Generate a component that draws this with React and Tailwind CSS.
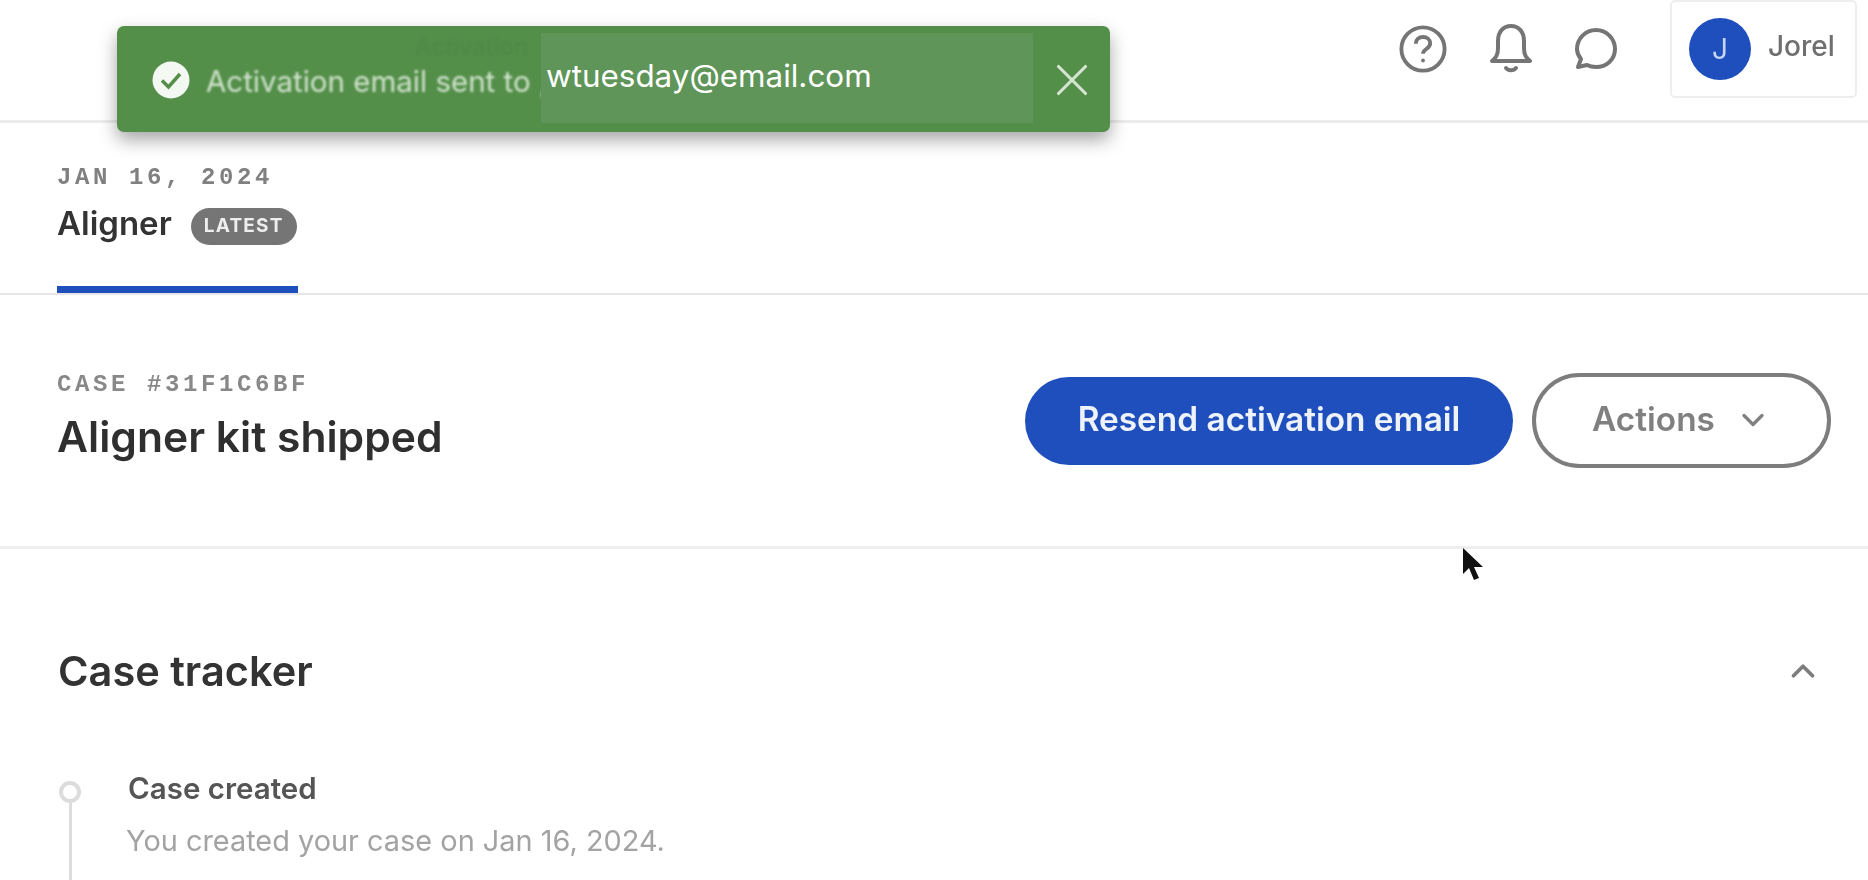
import { ChevronDown, ChevronUp, X } from "lucide-react";

const sans = "font-['Inter',sans-serif]";
const mono = "font-['Liberation_Mono',monospace]";

const Toast = () => (
  <div className={`absolute left-[117px] top-[26px] z-10 flex h-[106px] w-[993px] items-center rounded-[7px] bg-[#548f4a] pl-[35px] shadow-[0_8px_18px_rgba(0,0,0,0.35)] ${sans}`}>
    {/* ghost of the page title behind the toast */}
    <span className="absolute left-[298px] top-[9px] text-[24px] leading-[24px] text-[#4f8a45] blur-[1px]">Activation</span>
    <svg width="38" height="38" viewBox="0 0 38 38" className="mt-[2px] shrink-0 blur-[0.5px]">
      <circle cx="19" cy="19" r="18.5" fill="#f4f8f3" />
      <path d="M10 19.5l6.500 6.500 11.500-13" fill="none" stroke="#548f4a" strokeWidth="3.5" />
    </svg>
    <span className="mt-[3px] ml-[16px] text-[29.5px] leading-[32px] whitespace-nowrap text-[#cfe2cb] blur-[0.8px]">Activation email sent to ,</span>
    <div className="absolute left-[424px] top-[7px] flex h-[90px] w-[492px] items-center bg-[#5f9558] pb-[2px] pl-[5px] text-[31.4px] text-white">
      wtuesday@email.com
    </div>
    <X className="absolute right-[11px] top-[27px] text-[#d5e5d2] blur-[0.6px]" size={54} strokeWidth={1.4} />
  </div>
);

const Header = () => (
  <header className="flex h-[123px] items-start justify-end border-b-[3px] border-[#ececec] pr-[11px]">
    <div className="flex h-[98px] items-center gap-[42px] text-[#757575]">
      <svg className="blur-[0.5px]" width="48" height="48" viewBox="0 0 50 50" fill="none" stroke="currentColor" strokeWidth="4">
        <circle cx="25" cy="25" r="22.5" />
        <path d="M17.5 19.5c0-4.5 3.4-7 7.500-7s7.500 2.600 7.500 6.500c0 6-7.500 6-7.500 11" />
        <circle cx="25" cy="37" r="2" fill="currentColor" stroke="none" />
      </svg>
      <svg className="blur-[0.5px]" width="44" height="50" viewBox="0 0 44 50" fill="none" stroke="currentColor" strokeWidth="4" strokeLinejoin="round">
        <path d="M3 37c4-3.500 6-6 6-13V17C9 8 14 2 22 2s13 6 13 15v7c0 7 2 9.500 6 13H3z" />
        <path d="M17 44c2.500 3 7.500 3 10 0" strokeLinecap="round" />
      </svg>
      <svg className="blur-[0.5px]" width="42" height="42" viewBox="0 0 42 42" fill="none" stroke="currentColor" strokeWidth="4" strokeLinejoin="round">
        <path d="M3 39l3-8C3.500 28 2 25 2 21 2 10.500 10.500 2 21 2s19 8.500 19 19-8.500 18-19 18c-3.500 0-6.500-.7-9-2L3 39z" />
      </svg>
      <div className="ml-[11px] flex h-[98px] w-[187px] items-center rounded-[5px] border-[2px] border-[#eeeeee] pl-[17px]">
        <div className={`flex h-[62px] w-[62px] items-center justify-center rounded-full bg-[#1f4fbd] text-[28px] text-[#c7d5f3] blur-[0.5px] ${sans}`}>J</div>
        <span className={`ml-[17px] pb-[6px] text-[28px] font-medium text-[#6f6f6f] blur-[0.7px] ${sans}`}>Jorel</span>
      </div>
    </div>
  </header>
);

const TabBar = () => (
  <div className="flex h-[172px] border-b-[2px] border-[#e6e6e6] pl-[57px]">
    <div className="relative flex w-[241px] flex-col pt-[41px]">
      <span className={`text-[24px] leading-[28px] font-bold tracking-[3.6px] whitespace-nowrap text-[#808080] blur-[0.6px] ${mono}`}>JAN 16, 2024</span>
      <div className="mt-[9px] flex items-center">
        <span className={`text-[33px] leading-[40px] font-semibold text-[#333333] blur-[0.7px] ${sans}`}>Aligner</span>
        <span className={`mt-[7px] ml-[19px] flex h-[37px] w-[106px] items-center justify-center rounded-full bg-[#757575] text-[19px] font-bold tracking-[1.2px] text-[#eeeeee] blur-[0.7px] ${sans}`}>LATEST</span>
      </div>
      <div className="absolute right-0 bottom-0 left-0 h-[7px] bg-[#1f4fbd]" />
    </div>
  </div>
);

const CaseHeader = () => (
  <section className="flex h-[254px] items-start justify-between border-b-[3px] border-[#eeeeee] pr-[37px] pl-[57px]">
    <div className="pt-[76px]">
      <div className={`text-[24px] leading-[28px] font-bold tracking-[3.6px] whitespace-nowrap text-[#888888] blur-[0.6px] ${mono}`}>CASE #31F1C6BF</div>
      <h1 className={`mt-[12px] text-[42.6px] leading-[52px] font-semibold text-[#2f2f2f] blur-[0.7px] ${sans}`}>Aligner kit shipped</h1>
    </div>
    <div className="flex items-center gap-[19px] pt-[78px]">
      <button className={`flex h-[88px] w-[488px] items-center justify-center rounded-full bg-[#1f4fbd] pb-[2px] text-[33.4px] font-semibold text-[#eef2fb] blur-[0.6px] ${sans}`}>Resend activation email</button>
      <button className={`flex h-[95px] w-[299px] items-center justify-center rounded-full border-[4px] border-[#7d7d7d] pb-[2px] text-[33.4px] font-semibold text-[#808080] blur-[0.6px] ${sans}`}>
        Actions
        <ChevronDown className="ml-[20px]" size={36} strokeWidth={2.2} />
      </button>
    </div>
  </section>
);

const CaseTracker = () => (
  <section className="pr-[46px] pl-[58px]">
    <div className="flex items-center justify-between pt-[97px]">
      <h2 className={`text-[41.5px] leading-[50px] font-semibold text-[#333333] blur-[0.7px] ${sans}`}>Case tracker</h2>
      <ChevronUp className="text-[#7d7d7d] blur-[0.7px]" size={38} strokeWidth={2.4} />
    </div>
    <div className="mt-[73px] flex">
      <div className="flex w-[24px] flex-col items-center pt-[12px]">
        <div className="h-[22px] w-[22px] rounded-full border-[4px] border-[#dcdcdc]" />
        <div className="h-[90px] w-[3px] bg-[#dddddd]" />
      </div>
      <div className="ml-[46px]">
        <div className={`text-[29.5px] leading-[38px] font-semibold text-[#555555] blur-[0.7px] ${sans}`}>Case created</div>
        <p className={`mt-[15px] -ml-[2px] text-[28.9px] leading-[38px] whitespace-nowrap text-[#a3a3a3] blur-[0.7px] ${sans}`}>You created your case on Jan 16, 2024.</p>
      </div>
    </div>
  </section>
);

export default function App() {
  return (
    <div className="relative h-[880px] overflow-hidden bg-white">
      <Toast />
      <Header />
      <TabBar />
      <CaseHeader />
      <CaseTracker />
      {/* mouse pointer caught in the recording */}
      <svg className="absolute left-[1461px] top-[547px] blur-[0.7px]" width="25" height="38" viewBox="0 0 25 38">
        <path d="M2 1v26l6-6 5 12 5-2-5-11h9L2 1z" fill="#111111" />
      </svg>
    </div>
  );
}
